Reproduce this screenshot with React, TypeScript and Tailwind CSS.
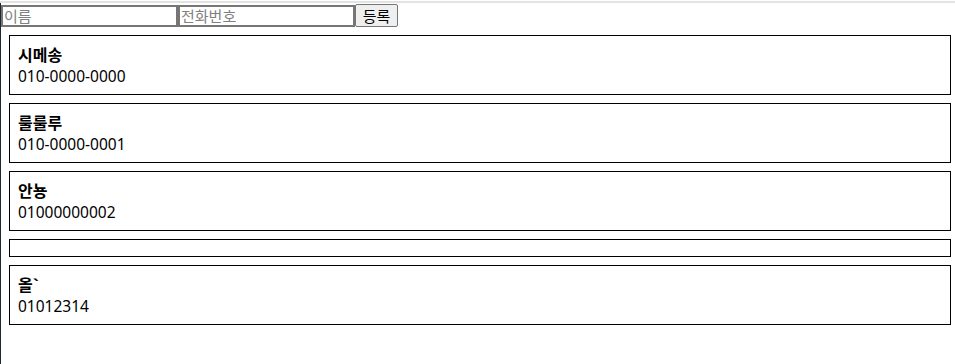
import React, { useState } from 'react';

interface Contact {
  id: number;
  name: string;
  phone: string;
}

const CONTACTS: Contact[] = [
  { id: 1, name: '시메송', phone: '010-0000-0000' },
  { id: 2, name: '룰룰루', phone: '010-0000-0001' },
  { id: 3, name: '안뇽', phone: '01000000002' },
  { id: 4, name: '', phone: '' },
  { id: 5, name: '올`', phone: '01012314' },
];

const font = "font-['Noto_Sans','Noto_Sans_CJK_KR',sans-serif]";

export default function App() {
  const [name, setName] = useState('');
  const [phone, setPhone] = useState('');

  return (
    <div className={`min-h-[364px] bg-white ${font} text-black`}>
      <div className="h-[3px] border-b-2 border-[#e3e3e3]" />
      <div className="border-l border-[#1f2730] min-h-[361px]">
        <div className="flex items-center h-[24px] pt-[1px]">
          <input
            value={name}
            onChange={(e) => setName(e.target.value)}
            placeholder="이름"
            className="w-[177px] h-[22px] border-2 border-[#767676] px-[1px] text-[15px] leading-[18px] placeholder:text-[#808080] outline-none"
          />
          <input
            value={phone}
            onChange={(e) => setPhone(e.target.value)}
            placeholder="전화번호"
            className="w-[177px] h-[22px] border-2 border-[#767676] px-[1px] text-[15px] leading-[18px] placeholder:text-[#808080] outline-none"
          />
          <button className="h-[23px] w-[43px] border border-[#767676] rounded-[2px] bg-[#efefef] text-[15px] leading-[18px]">
            등록
          </button>
        </div>
        <div className="flex flex-col gap-2 pt-2 pl-2 pr-1">
          {CONTACTS.map((c) => (
            <div key={c.id} className="w-[942px] border border-black px-2 pt-[9px] pb-[7px]">
              {c.name && <div className="font-bold text-[16px] leading-[21px]">{c.name}</div>}
              {c.phone && <div className="text-[15.5px] leading-[21px]">{c.phone}</div>}
            </div>
          ))}
        </div>
      </div>
    </div>
  );
}
